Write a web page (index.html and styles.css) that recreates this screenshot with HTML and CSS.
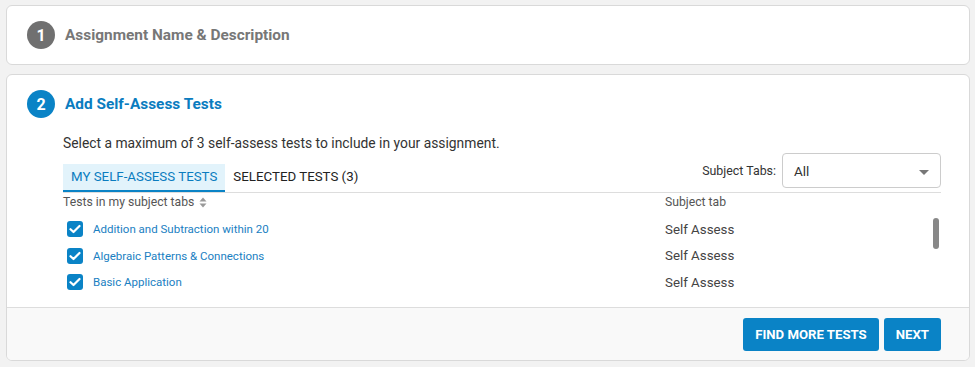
FILE: index.html
```html
<!DOCTYPE html>
<html>
<head>
<meta charset="utf-8">
<link rel="stylesheet" href="styles.css">
</head>
<body>
<div class="page">
  <section class="card card-collapsed">
    <div class="step-head">
      <span class="step-num grey">1</span>
      <span class="step-title grey-text">Assignment Name &amp; Description</span>
    </div>
  </section>

  <section class="card card-open">
    <div class="card-body">
      <div class="step-head">
        <span class="step-num blue">2</span>
        <span class="step-title blue-text">Add Self-Assess Tests</span>
      </div>
      <div class="content">
        <p class="desc">Select a maximum of 3 self-assess tests to include in your assignment.</p>
        <div class="toolbar">
          <div class="tabs">
            <div class="tab active">MY SELF-ASSESS TESTS</div>
            <div class="tab">SELECTED TESTS (3)</div>
          </div>
          <div class="filter">
            <span class="filter-label">Subject Tabs:</span>
            <div class="select">
              <span>All</span>
              <span class="caret"></span>
            </div>
          </div>
        </div>
        <div class="list-head">
          <div class="col-name">Tests in my subject tabs
            <svg class="sort" width="8" height="11" viewBox="0 0 8 11"><path d="M4 0.5 L7.5 4.5 H0.5 Z M4 10.5 L7.5 6.5 H0.5 Z" fill="#999"/></svg>
          </div>
          <div class="col-subj">Subject tab</div>
        </div>
        <div class="list-wrap">
          <div class="list">
            <div class="row">
              <div class="col-name"><span class="check"><svg width="12" height="10" viewBox="0 0 12 10"><path d="M1.5 5.2 L4.5 8 L10.5 2" fill="none" stroke="#fff" stroke-width="2.2" stroke-linecap="round" stroke-linejoin="round"/></svg></span><a class="link">Addition and Subtraction within 20</a></div>
              <div class="col-subj">Self Assess</div>
            </div>
            <div class="row">
              <div class="col-name"><span class="check"><svg width="12" height="10" viewBox="0 0 12 10"><path d="M1.5 5.2 L4.5 8 L10.5 2" fill="none" stroke="#fff" stroke-width="2.2" stroke-linecap="round" stroke-linejoin="round"/></svg></span><a class="link">Algebraic Patterns &amp; Connections</a></div>
              <div class="col-subj">Self Assess</div>
            </div>
            <div class="row">
              <div class="col-name"><span class="check"><svg width="12" height="10" viewBox="0 0 12 10"><path d="M1.5 5.2 L4.5 8 L10.5 2" fill="none" stroke="#fff" stroke-width="2.2" stroke-linecap="round" stroke-linejoin="round"/></svg></span><a class="link">Basic Application</a></div>
              <div class="col-subj">Self Assess</div>
            </div>
          </div>
          <div class="scrolltrack"><div class="thumb"></div></div>
        </div>
      </div>
    </div>
    <div class="footer">
      <button class="btn">FIND MORE TESTS</button>
      <button class="btn">NEXT</button>
    </div>
  </section>
</div>
</body>
</html>
```

FILE: styles.css
```css
html, body {
  margin: 0;
  padding: 0;
  background: #f2f2f2;
  font-family: Roboto, "Liberation Sans", sans-serif;
  color: #333;
}
.page {
  padding: 5px 5px 0 6px;
  display: flex;
  flex-direction: column;
  gap: 9px;
}
.card {
  background: #fff;
  border: 1px solid #d9d9d9;
  border-radius: 6px;
  width: 962px;
}
.card-collapsed {
  height: 58px;
  display: flex;
  align-items: center;
  padding-left: 20px;
  box-sizing: content-box;
  width: 942px;
}
.step-head {
  display: flex;
  align-items: center;
  gap: 10px;
}
.step-num {
  width: 28px;
  height: 28px;
  border-radius: 50%;
  color: #fff;
  font-weight: 700;
  font-size: 16px;
  display: flex;
  align-items: center;
  justify-content: center;
}
.step-num.grey { background: #707070; }
.step-num.blue { background: #0a83c6; }
.step-title {
  font-size: 15.4px;
  font-weight: 700;
}
.grey-text { color: #777; }
.blue-text { color: #0a7cbf; }

.card-open {
  height: 285px;
  display: flex;
  flex-direction: column;
  overflow: hidden;
}
.card-body {
  flex: 1;
  padding: 15px 28px 0 20px;
}
.content {
  padding-left: 36px;
}
.desc {
  margin: 16px 0 0 0;
  font-size: 13.85px;
  line-height: 18px;
  color: #333;
}
.toolbar {
  margin-top: 1px;
  display: flex;
  justify-content: space-between;
  align-items: flex-end;
  border-bottom: 1px solid #ddd;
}
.tabs {
  display: flex;
  align-items: flex-end;
}
.tab {
  font-size: 13.3px;
  line-height: 24px;
  padding: 1px 8px 1px 8px;
  color: #222;
  border-bottom: 2px solid transparent;
}
.tab.active {
  background: #e2f3fb;
  color: #0a7cbf;
  border-bottom-color: #0a83c6;
}
.filter {
  display: flex;
  align-items: center;
  gap: 6px;
  margin-bottom: 4px;
}
.filter-label {
  font-size: 12.4px;
  color: #333;
}
.select {
  width: 135px;
  height: 33px;
  border: 1px solid #ccc;
  border-radius: 4px;
  padding: 0 11px 0 11px;
  display: flex;
  align-items: center;
  justify-content: space-between;
  font-size: 13.5px;
  color: #333;
  box-sizing: content-box;
}
.caret {
  width: 0;
  height: 0;
  border-left: 5px solid transparent;
  border-right: 5px solid transparent;
  border-top: 5px solid #777;
  margin-top: 3px;
}
.list-head {
  display: flex;
  font-size: 12.2px;
  color: #555;
  margin-top: 1px;
  height: 17px;
  line-height: 17px;
}
.col-name {
  width: 602px;
  display: flex;
  align-items: center;
}
.col-subj {
  flex: 1;
}
.sort {
  margin-left: 5px;
}
.list-wrap {
  display: flex;
}
.list {
  flex: 1;
  padding-top: 5px;
}
.row {
  display: flex;
  align-items: center;
  height: 26.5px;
}
.row .col-subj {
  font-size: 13.3px;
  color: #444;
}
.check {
  width: 16px;
  height: 16px;
  border-radius: 3px;
  background: #0a83c6;
  display: flex;
  align-items: center;
  justify-content: center;
  margin-left: 4px;
  margin-right: 10px;
}
.link {
  font-size: 11.5px;
  color: #1a80c2;
}
.scrolltrack {
  width: 6px;
  margin-right: 2px;
}
.thumb {
  width: 6px;
  height: 31px;
  margin-top: 7px;
  background: #888;
  border-radius: 3px;
}
.footer {
  height: 53px;
  background: #f9f9f9;
  border-top: 1px solid #ddd;
  display: flex;
  justify-content: flex-end;
  align-items: flex-start;
  gap: 5px;
  padding: 10px 28px 0 0;
  box-sizing: border-box;
}
.btn {
  height: 33px;
  padding: 0 12px;
  background: #0a83c6;
  color: #fff;
  border: none;
  border-radius: 3px;
  font-family: Roboto, "Liberation Sans", sans-serif;
  font-weight: 700;
  font-size: 13.2px;
}
```
